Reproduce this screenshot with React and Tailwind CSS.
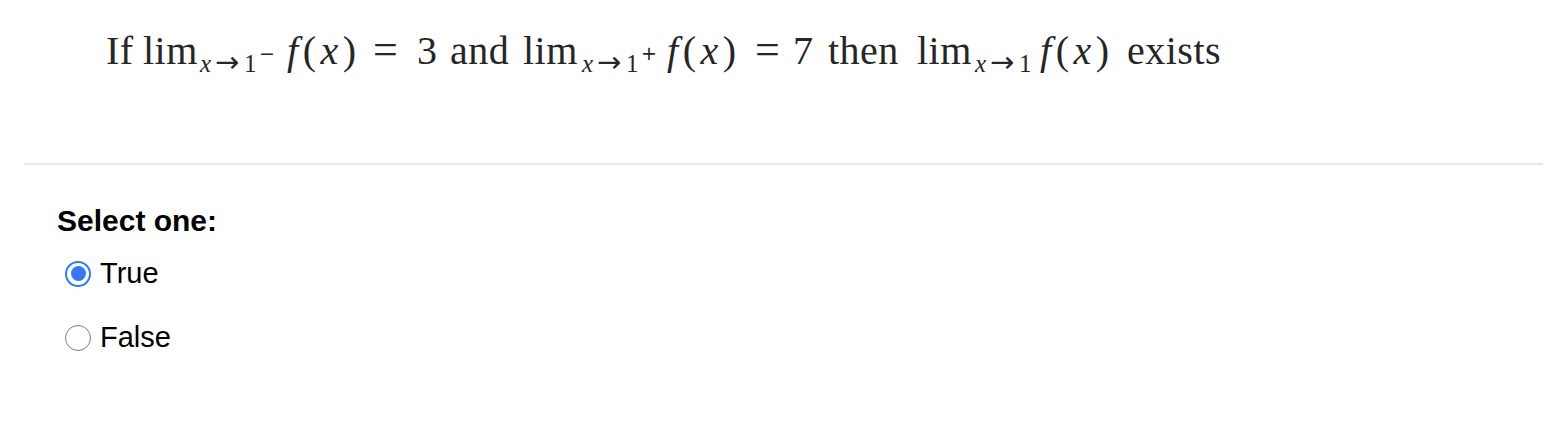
import React, { useState } from "react";

const serif = { fontFamily: '"Liberation Serif", "Times New Roman", serif' };

// one word/symbol of the statement, in a box of its own width
const Tok = ({ w, children, className = "" }) => (
  <span className={`inline-block ${w} ${className}`}>{children}</span>
);

// x → 1 subscript under "lim", with an optional one-sided sign
const LimSub = ({ w, sign }) => (
  <Tok w={w}>
    <span className="relative top-[8px] text-[25px] whitespace-nowrap tracking-normal">
      <span className="inline-block w-[17px] italic pl-[2px]">x</span>
      <span
        className="inline-block w-[29px] text-[29px] leading-none"
        style={{ fontFamily: '"DejaVu Sans", sans-serif' }}
      >
        →
      </span>
      <span className="inline-block w-[15px]">1</span>
      {sign && (
        <span className="relative -top-[12px] text-[19px]" style={{ fontFamily: '"DejaVu Sans", sans-serif' }}>
          {sign}
        </span>
      )}
    </span>
  </Tok>
);

const Fx = ({ w }) => (
  <Tok w={w} className="tracking-[4.5px]">
    <span className="italic">f</span>(<span className="italic">x</span>)
  </Tok>
);

const Radio = ({ checked, label, onChange }) => (
  <label className="flex items-center gap-[9px] cursor-pointer" onClick={onChange}>
    {checked ? (
      <span className="flex items-center justify-center w-[26px] h-[26px] rounded-full border-[2.5px] border-[#3478f6] bg-white">
        <span className="w-[15px] h-[15px] rounded-full bg-[#3478f6]" />
      </span>
    ) : (
      <span className="w-[26px] h-[26px] rounded-full border-[1.5px] border-[#7c7c7c] bg-white" />
    )}
    <span className="text-[29px] leading-none text-black">{label}</span>
  </label>
);

export default function App() {
  const [answer, setAnswer] = useState("true");

  return (
    <div className="w-[1560px] h-[430px] bg-white" style={{ fontFamily: '"Liberation Sans", Arial, sans-serif' }}>
      {/* question text */}
      <div className="h-[163px] pl-[106px] pt-[28px]">
        <p className="text-[40px] leading-none text-[#262626] tracking-[0.5px] whitespace-nowrap" style={serif}>
          <Tok w="w-[37px]">If</Tok>
          <Tok w="w-[55px]">lim</Tok>
          <LimSub w="w-[89px]" sign="−" />
          <Fx w="w-[86px]" />
          <Tok w="w-[44px]" className="text-[44px]">=</Tok>
          <Tok w="w-[33px]">3</Tok>
          <Tok w="w-[73px]">and</Tok>
          <Tok w="w-[57px]">lim</Tok>
          <LimSub w="w-[87px]" sign="+" />
          <Fx w="w-[88px]" />
          <Tok w="w-[38px]" className="text-[44px]">=</Tok>
          <Tok w="w-[35px]">7</Tok>
          <Tok w="w-[89px]">then</Tok>
          <Tok w="w-[56px]">lim</Tok>
          <LimSub w="w-[67px]" />
          <Fx w="w-[87px]" />
          <Tok w="w-[100px]">exists</Tok>
        </p>
      </div>
      <div className="ml-6 mr-[17px] h-[2px] bg-[#e6e6eb]" />

      {/* answers */}
      <div className="pl-[57px] pt-[41px]">
        <div className="text-[30px] font-bold leading-none text-black">Select one:</div>
        <div className="flex flex-col gap-[35px] pl-[8px] mt-[23px]">
          <Radio checked={answer === "true"} label="True" onChange={() => setAnswer("true")} />
          <Radio checked={answer === "false"} label="False" onChange={() => setAnswer("false")} />
        </div>
      </div>
    </div>
  );
}
